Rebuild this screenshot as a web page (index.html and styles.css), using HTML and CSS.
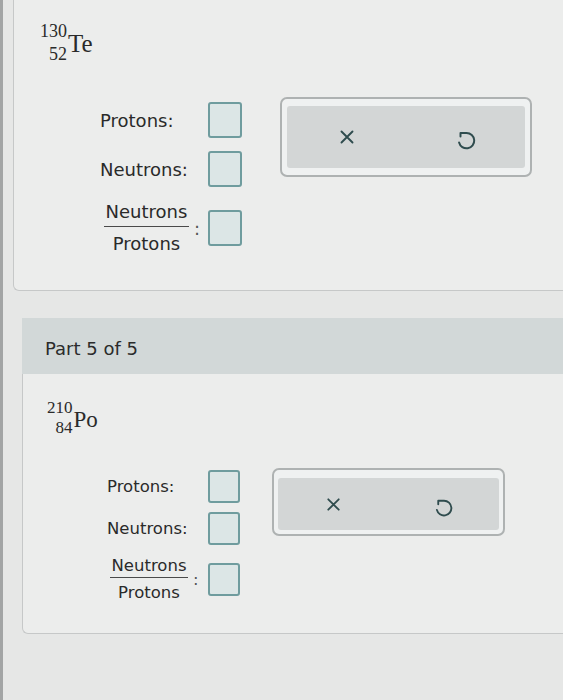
FILE: index.html
```html
<!DOCTYPE html>
<html>
<head>
<meta charset="utf-8">
<link rel="stylesheet" href="styles.css">
</head>
<body>
<div class="page">
  <section class="card card-a">
    <div class="iso iso-a">
      <div class="nums"><span>130</span><span>52</span></div>
      <div class="sym">Te</div>
    </div>
    <div class="work work-a">
      <div class="grid">
        <div class="label">Protons:</div>
        <div class="box"></div>
        <div class="label">Neutrons:</div>
        <div class="box"></div>
        <div class="label frac-cell">
          <div class="frac"><span class="num">Neutrons</span><span class="den">Protons</span></div>
          <span class="colon">:</span>
        </div>
        <div class="box"></div>
      </div>
      <div class="tools">
        <div class="tools-inner">
          <button class="tool" type="button"><svg class="ic-x" viewBox="0 0 20 20"><path d="M4.5 4.5 L15.5 15.5 M15.5 4.5 L4.5 15.5" fill="none" stroke="#2f4c4e" stroke-width="1.9" stroke-linecap="round"/></svg></button>
          <button class="tool" type="button"><svg class="ic-undo" viewBox="0 0 20 20"><path d="M10.5 4.5 A7 7 0 1 1 3.7 13.2 M10.5 4.5 H5 V7.8" fill="none" stroke="#2f4c4e" stroke-width="1.8" stroke-linecap="round" stroke-linejoin="round"/></svg></button>
        </div>
      </div>
    </div>
  </section>

  <section class="card card-b">
    <header class="part-head">Part 5 of 5</header>
    <div class="card-b-body">
      <div class="iso iso-b">
        <div class="nums"><span>210</span><span>84</span></div>
        <div class="sym">Po</div>
      </div>
      <div class="work work-b">
        <div class="grid">
          <div class="label">Protons:</div>
          <div class="box"></div>
          <div class="label">Neutrons:</div>
          <div class="box"></div>
          <div class="label frac-cell">
            <div class="frac"><span class="num">Neutrons</span><span class="den">Protons</span></div>
            <span class="colon">:</span>
          </div>
          <div class="box"></div>
        </div>
        <div class="tools">
          <div class="tools-inner">
            <button class="tool" type="button"><svg class="ic-x" viewBox="0 0 20 20"><path d="M4.5 4.5 L15.5 15.5 M15.5 4.5 L4.5 15.5" fill="none" stroke="#2f4c4e" stroke-width="1.9" stroke-linecap="round"/></svg></button>
            <button class="tool" type="button"><svg class="ic-undo" viewBox="0 0 20 20"><path d="M10.5 4.5 A7 7 0 1 1 3.7 13.2 M10.5 4.5 H5 V7.8" fill="none" stroke="#2f4c4e" stroke-width="1.8" stroke-linecap="round" stroke-linejoin="round"/></svg></button>
          </div>
        </div>
      </div>
    </div>
  </section>
</div>
</body>
</html>
```

FILE: styles.css
```css
html, body {
  margin: 0;
  padding: 0;
}
body {
  background: #e6e7e6;
  font-family: "DejaVu Sans", Verdana, sans-serif;
  color: #2a2a2a;
  overflow: hidden;
}
.page {
  border-left: 3px solid #a3a5a5;
  min-height: 700px;
  box-sizing: border-box;
  padding-bottom: 10px;
}
.card {
  background: #ecedec;
  border: 1px solid #c6c8c8;
  border-right: none;
}
.card-a {
  margin-left: 10px;
  border-top: none;
  border-bottom-left-radius: 6px;
  padding: 20px 0 34px 26px;
}
.card-b {
  margin-left: 19px;
  margin-top: 27px;
  border-top: none;
  border-bottom-left-radius: 6px;
}
.part-head {
  background: #d2d8d8;
  height: 56px;
  box-sizing: border-box;
  display: flex;
  align-items: center;
  padding: 4px 0 0 23px;
  font-size: 18px;
  color: #2b2b2b;
  margin-left: -1px;
}
.card-b-body {
  padding: 24px 0 30px 24px;
}

/* isotope notation */
.iso {
  display: flex;
  align-items: center;
  font-family: "Liberation Serif", "Times New Roman", serif;
  color: #2a2a2a;
}
.nums {
  display: flex;
  flex-direction: column;
  align-items: flex-end;
}
.iso-a .nums { font-size: 18px; line-height: 23px; }
.iso-a .sym { font-size: 25px; line-height: 1; margin-left: 1px; margin-top: 1px; }
.iso-b .nums { font-size: 17px; line-height: 20px; }
.iso-b .sym { font-size: 23px; line-height: 1; margin-left: 1px; margin-top: 2px; }

/* work area */
.work {
  display: flex;
  align-items: flex-start;
}
.work-a { margin: 31px 0 0 60px; }
.work-b { margin: 30px 0 0 60px; }

.grid {
  display: grid;
  align-items: center;
  column-gap: 8px;
}
.work-a .grid {
  grid-template-columns: 100px 34px;
  row-gap: 13px;
  margin-top: 5px;
  font-size: 18px;
}
.work-b .grid {
  grid-template-columns: 93px 32px;
  row-gap: 9px;
  margin-top: 2px;
  font-size: 16.5px;
}
.label {
  white-space: nowrap;
  color: #2a2a2a;
}
.box {
  box-sizing: border-box;
  border: 2px solid #6f9c9e;
  border-radius: 3px;
  background: #dce6e6;
}
.work-a .box { width: 34px; height: 36px; }
.work-b .box { width: 32px; height: 33px; }
.work-b .frac-cell, .work-b .frac-cell + .box { margin-top: 2px; }

.frac-cell {
  display: flex;
  align-items: center;
}
.frac {
  display: flex;
  flex-direction: column;
  align-items: center;
}
.work-a .frac { margin-left: 4px; width: 86px; }
.work-b .frac { margin-left: 3px; width: 78px; }
.num {
  display: block;
  width: 100%;
  text-align: center;
  border-bottom: 1.5px solid #4a4a4a;
}
.work-a .num { line-height: 24px; padding-bottom: 2px; }
.work-a .den { line-height: 24px; padding-top: 5px; }
.work-b .num { line-height: 20px; padding-bottom: 1px; }
.work-b .den { line-height: 21px; padding-top: 4px; }
.colon {
  margin-left: 5px;
  color: #555;
}

/* tools panel */
.tools {
  box-sizing: border-box;
  border: 2px solid #aeb2b2;
  border-radius: 7px;
  background: #eff1f1;
}
.work-a .tools {
  margin-left: 38px;
  width: 252px;
  height: 80px;
  padding: 7px 5px;
}
.work-b .tools {
  margin-left: 32px;
  width: 233px;
  height: 68px;
  padding: 8px 4px 4px 4px;
}
.tools-inner {
  display: flex;
  height: 100%;
  background: #d3d6d6;
  border-radius: 3px;
}
.tool {
  flex: 1;
  border: none;
  background: transparent;
  padding: 0;
  display: flex;
  align-items: center;
  justify-content: center;
}
.tool svg { display: block; }
.ic-x { width: 20px; height: 20px; }
.ic-undo { width: 22px; height: 22px; margin-top: 3px; }
.work-b .ic-x { width: 19px; height: 19px; }
.work-b .ic-undo { width: 21px; height: 21px; margin-top: 4px; }
```
